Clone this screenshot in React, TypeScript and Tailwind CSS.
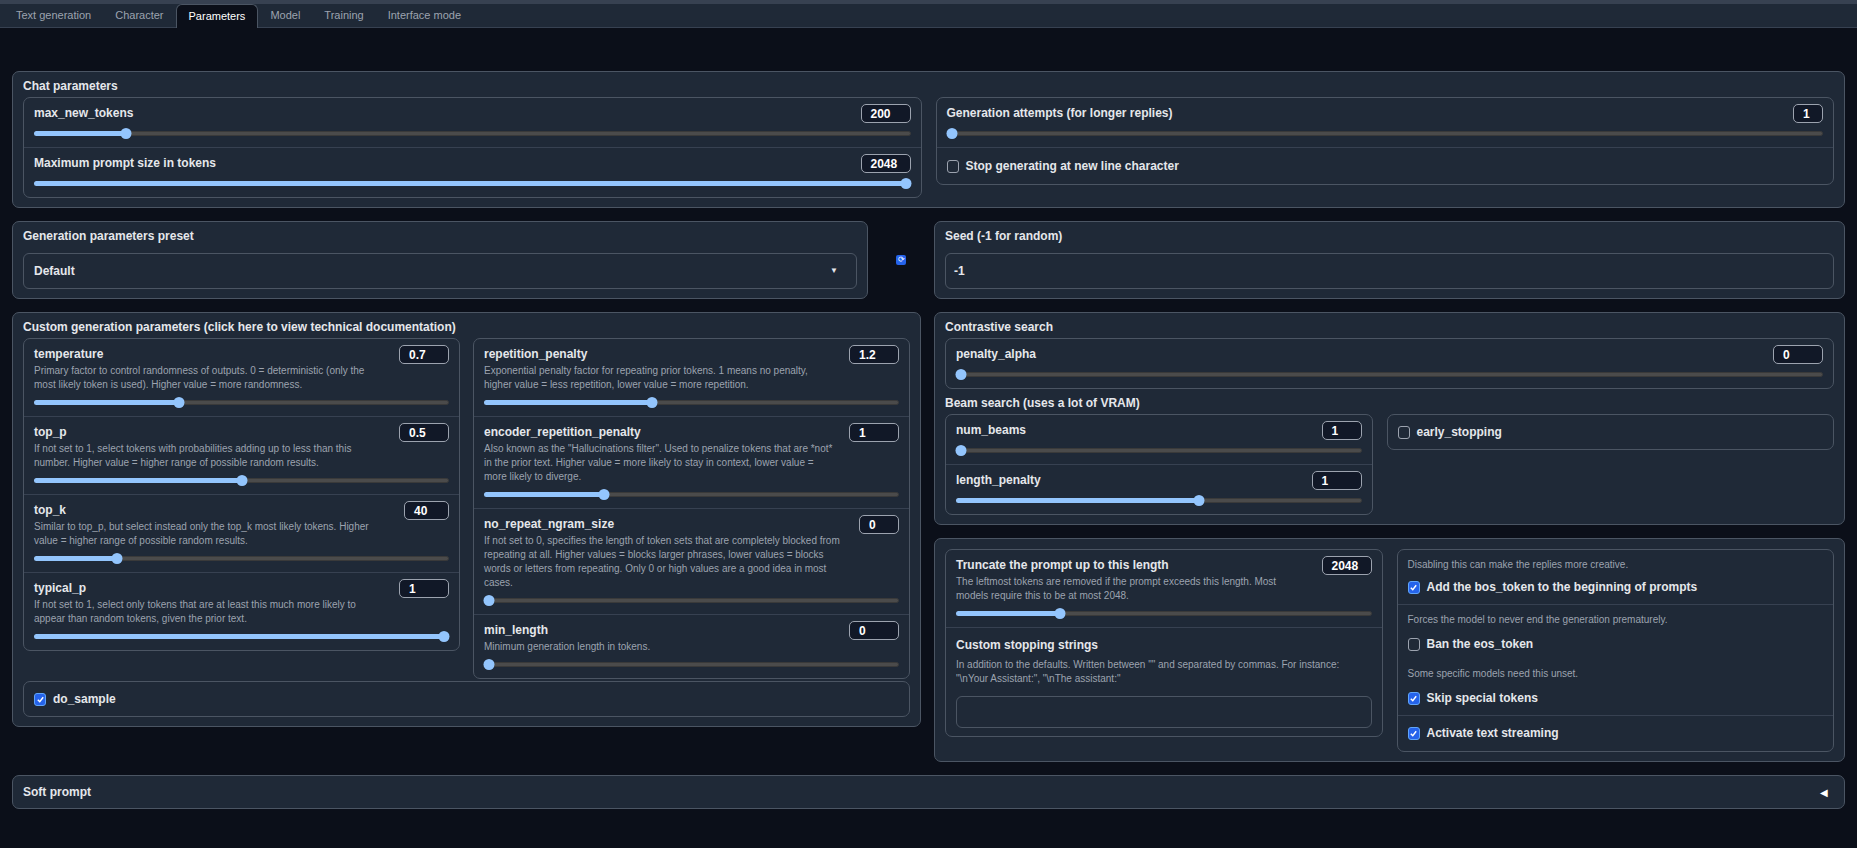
import React from "react";

const F = { fontFamily: '"Liberation Sans", Arial, sans-serif' };

function Slider({ v }: { v: number }) {
  return (
    <div className="relative h-[12px] flex items-center mt-[4px]">
      <div className="w-full h-[5px] rounded-full bg-[#4b4b4b] border border-[#3a3a3a]" />
      <div className="absolute left-0 h-[5px] rounded-full bg-[#93c5fd]" style={{ width: `${v * 100}%` }} />
      <div className="absolute w-[11px] h-[11px] rounded-full bg-[#93c5fd] -translate-x-1/2" style={{ left: `calc(${v * 100}% + ${v < 0.02 ? 5 : v > 0.98 ? -5 : 0}px)` }} />
    </div>
  );
}

function Num({ val, w = "w-[50px]" }: { val: string; w?: string }) {
  return (
    <div className={`${w} h-[19px] shrink-0 rounded-[5px] border border-[#9ca3af] bg-[#111827] text-[12px] text-white flex items-center px-[9px] font-bold`}>{val}</div>
  );
}

function Row({ label, desc, val, v, last, nw }: { label: string; desc?: string; val: string; v: number; last?: boolean; nw?: string }) {
  return (
    <div className={`px-[10px] pt-[6px] pb-[8px] ${last ? "" : "border-b border-[#374151]"}`}>
      <div className="flex items-start gap-[16px]">
        <div className="flex-1">
          <div className="text-[12px] font-bold text-[#e5e7eb] leading-[18px]">{label}</div>
          {desc && <div className="text-[10px] text-[#9ca3af] leading-[14px] mt-[1px]">{desc}</div>}
        </div>
        <Num val={val} w={nw} />
      </div>
      <Slider v={v} />
    </div>
  );
}

function Box({ children, className = "" }: { children: React.ReactNode; className?: string }) {
  return <div className={`rounded-[7px] border border-[#4b5563] bg-[#1f2937] ${className}`}>{children}</div>;
}

function Panel({ children, className = "" }: { children: React.ReactNode; className?: string }) {
  return <div className={`rounded-[7px] border border-[#4b5563] bg-[#1f2937] px-[10px] pb-[9px] ${className}`}>{children}</div>;
}

function Title({ children }: { children: React.ReactNode }) {
  return <div className="text-[12px] font-bold text-[#e5e7eb] pt-[6px] pb-[3px] leading-[16px]">{children}</div>;
}

function Check({ on, label }: { on: boolean; label: string }) {
  return (
    <div className="flex items-center gap-[7px]">
      <div className={`w-[12px] h-[13px] rounded-[3px] flex items-center justify-center ${on ? "bg-[#2563eb] border border-[#60a5fa]" : "border border-[#9ca3af] bg-[#1f2937]"}`}>
        {on && (
          <svg width="9" height="9" viewBox="0 0 10 10"><path d="M2 5.2 L4.2 7.5 L8 2.5" stroke="white" strokeWidth="1.6" fill="none" /></svg>
        )}
      </div>
      <span className="text-[12px] font-bold text-[#e5e7eb]">{label}</span>
    </div>
  );
}

export default function App() {
  const tabs = ["Text generation", "Character", "Parameters", "Model", "Training", "Interface mode"];
  return (
    <div style={F} className="w-[1857px] h-[848px] bg-[#0b0f19] overflow-hidden">
      <div className="h-[4px] bg-[#374151]" />
      <div className="h-[24px] bg-[#1f2937] flex items-end pl-[4px] border-b border-[#374151]">
        {tabs.map((t) => (
          <div key={t} className={`h-[24px] px-[12px] flex items-center text-[11px] ${t === "Parameters" ? "bg-[#0b0f19] text-white border border-b-0 border-[#4b5563] rounded-t-[6px] mb-[-1px]" : "text-[#9ca3af]"}`}>{t}</div>
        ))}
      </div>
      <div className="px-[12px] pt-[43px] flex flex-col gap-[13px]">
        <Panel>
          <Title>Chat parameters</Title>
          <div className="flex gap-[14px]">
            <Box className="flex-1">
              <Row label="max_new_tokens" val="200" v={0.105} />
              <Row label="Maximum prompt size in tokens" val="2048" v={1} last />
            </Box>
            <Box className="flex-1 self-start">
              <div className="px-[10px] pt-[6px] pb-[8px] border-b border-[#374151]">
                <div className="flex justify-between"><span className="text-[12px] font-bold text-[#e5e7eb]">Generation attempts (for longer replies)</span><Num val="1" w="w-[30px]" /></div>
                <Slider v={0} />
              </div>
              <div className="px-[10px] py-[9px]"><Check on={false} label="Stop generating at new line character" /></div>
            </Box>
          </div>
        </Panel>

        <div className="flex gap-[14px] items-stretch">
          <Panel className="w-[856px]">
            <Title>Generation parameters preset</Title>
            <div className="rounded-[6px] border border-[#4b5563] h-[36px] flex items-center justify-between px-[10px] mt-[6px]">
              <span className="text-[12px] font-bold text-[#e5e7eb]">Default</span>
              <span className="text-[#e5e7eb] text-[8px] mr-[8px]">▼</span>
            </div>
          </Panel>
          <div className="w-[38px] flex items-center justify-center">
            <div className="w-[10px] h-[10px] bg-[#2563eb] rounded-[2px] flex items-center justify-center text-white text-[8px]">⟳</div>
          </div>
          <Panel className="flex-1">
            <Title>Seed (-1 for random)</Title>
            <div className="rounded-[6px] border border-[#4b5563] h-[36px] flex items-center px-[8px] mt-[6px] text-[12px] font-bold text-[#e5e7eb]">-1</div>
          </Panel>
        </div>

        <div className="flex gap-[13px] items-start">
          <Panel className="w-[909px]">
            <Title>Custom generation parameters (click here to view technical documentation)</Title>
            <div className="flex gap-[13px] items-start">
              <Box className="flex-1">
                <Row label="temperature" desc="Primary factor to control randomness of outputs. 0 = deterministic (only the most likely token is used). Higher value = more randomness." val="0.7" v={0.35} />
                <Row label="top_p" desc="If not set to 1, select tokens with probabilities adding up to less than this number. Higher value = higher range of possible random results." val="0.5" v={0.5} />
                <Row label="top_k" desc="Similar to top_p, but select instead only the top_k most likely tokens. Higher value = higher range of possible random results." val="40" v={0.2} nw="w-[45px]" />
                <Row label="typical_p" desc="If not set to 1, select only tokens that are at least this much more likely to appear than random tokens, given the prior text." val="1" v={1} last />
              </Box>
              <Box className="flex-1">
                <Row label="repetition_penalty" desc="Exponential penalty factor for repeating prior tokens. 1 means no penalty, higher value = less repetition, lower value = more repetition." val="1.2" v={0.405} />
                <Row label="encoder_repetition_penalty" desc={'Also known as the "Hallucinations filter". Used to penalize tokens that are *not* in the prior text. Higher value = more likely to stay in context, lower value = more likely to diverge.'} val="1" v={0.29} />
                <Row label="no_repeat_ngram_size" desc="If not set to 0, specifies the length of token sets that are completely blocked from repeating at all. Higher values = blocks larger phrases, lower values = blocks words or letters from repeating. Only 0 or high values are a good idea in most cases." val="0" v={0} nw="w-[40px]" />
                <Row label="min_length" desc="Minimum generation length in tokens." val="0" v={0} last />
              </Box>
            </div>
            <Box className="mt-[2px] px-[10px] py-[8px]"><Check on label="do_sample" /></Box>
          </Panel>

          <div className="flex-1 flex flex-col gap-[13px]">
            <Panel>
              <Title>Contrastive search</Title>
              <Box><Row label="penalty_alpha" val="0" v={0} last /></Box>
              <Title>Beam search (uses a lot of VRAM)</Title>
              <div className="flex gap-[14px] items-start">
                <Box className="flex-1">
                  <Row label="num_beams" val="1" v={0} nw="w-[40px]" />
                  <Row label="length_penalty" val="1" v={0.6} last nw="w-[50px]" />
                </Box>
                <Box className="flex-1 px-[10px] py-[8px]"><Check on={false} label="early_stopping" /></Box>
              </div>
            </Panel>
            <Panel className="pt-[10px]">
              <div className="flex gap-[14px] items-start">
                <Box className="flex-1">
                  <Row label="Truncate the prompt up to this length" desc="The leftmost tokens are removed if the prompt exceeds this length. Most models require this to be at most 2048." val="2048" v={0.25} />
                  <div className="px-[10px] pt-[8px] pb-[8px]">
                    <div className="text-[12px] font-bold text-[#e5e7eb]">Custom stopping strings</div>
                    <div className="text-[10px] text-[#9ca3af] leading-[14px] mt-[4px]">In addition to the defaults. Written between "" and separated by commas. For instance: "\nYour Assistant:", "\nThe assistant:"</div>
                    <div className="mt-[10px] h-[32px] rounded-[6px] border border-[#4b5563]" />
                  </div>
                </Box>
                <Box className="flex-1">
                  <div className="px-[10px] pt-[8px] pb-[8px] border-b border-[#374151]">
                    <div className="text-[10px] text-[#9ca3af] leading-[14px]">Disabling this can make the replies more creative.</div>
                    <div className="mt-[6px]"><Check on label="Add the bos_token to the beginning of prompts" /></div>
                  </div>
                  <div className="px-[10px] pt-[8px] pb-[8px]">
                    <div className="text-[10px] text-[#9ca3af] leading-[14px]">Forces the model to never end the generation prematurely.</div>
                    <div className="mt-[8px]"><Check on={false} label="Ban the eos_token" /></div>
                    <div className="text-[10px] text-[#9ca3af] leading-[14px] mt-[14px]">Some specific models need this unset.</div>
                    <div className="mt-[8px]"><Check on label="Skip special tokens" /></div>
                  </div>
                  <div className="px-[10px] pt-[8px] pb-[9px] border-t border-[#374151]"><Check on label="Activate text streaming" /></div>
                </Box>
              </div>
            </Panel>
          </div>
        </div>

        <div className="rounded-[7px] border border-[#4b5563] bg-[#1f2937] h-[34px] px-[10px] flex items-center justify-between">
          <span className="text-[12px] font-bold text-[#e5e7eb]">Soft prompt</span>
          <span className="text-white text-[10px] mr-[6px]">◀</span>
        </div>
      </div>
    </div>
  );
}
